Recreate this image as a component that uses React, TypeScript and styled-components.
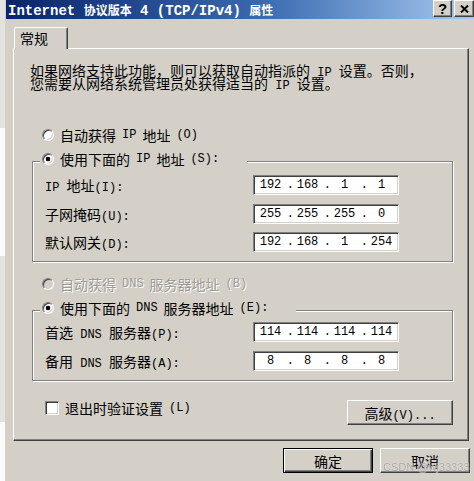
import React from 'react';
import styled, { createGlobalStyle } from 'styled-components';

const Colors = {
  face: '#d4d0c8',
  shadow: '#808080',
  dark: '#404040',
  light: '#ffffff',
  disabled: '#9f9c96',
};

const GlobalStyle = createGlobalStyle`
  html, body {
    margin: 0;
    padding: 0;
  }
  body {
    width: 474px;
    height: 481px;
    overflow: hidden;
    background: ${Colors.face};
    font-family: "Noto Sans CJK SC", sans-serif;
    font-size: 14px;
    color: #000;
  }
`;

const Screen = styled.div`
  position: relative;
  display: flex;
  width: 474px;
  height: 481px;
  overflow: hidden;
`;

// a sliver of the window behind the dialog
const BehindStrip = styled.div`
  flex: none;
  width: 5px;
  border-right: 1px solid ${Colors.face};
  background: linear-gradient(
    to bottom,
    #e4e2de 0 128px,
    #fbfbfb 128px 256px,
    #e4e2de 256px 422px,
    #fbfbfb 422px
  );
`;

const Window = styled.div`
  flex: 1;
  display: flex;
  flex-direction: column;
  min-width: 0;
`;

const TitleBar = styled.div`
  display: flex;
  align-items: flex-start;
  height: 19px;
  padding-left: 2px;
  background: linear-gradient(to right, #0a246a 0%, #3a6ab0 55%, #a6caf0 100%);
`;

const TitleText = styled.div`
  flex: 1;
  line-height: 19px;
  color: #fff;
  font-size: 12px;
  font-weight: bold;
  white-space: nowrap;
`;

const CaptionButton = styled.div<{ $width: number }>`
  display: flex;
  justify-content: center;
  align-items: center;
  box-sizing: border-box;
  width: ${(p) => p.$width}px;
  height: 17px;
  margin-left: 2px;
  background: ${Colors.face};
  border: 1px solid;
  border-color: ${Colors.light} ${Colors.dark} ${Colors.dark} ${Colors.light};
  box-shadow: inset -1px -1px 0 ${Colors.shadow};
  font-family: "Liberation Sans", sans-serif;
  font-weight: bold;
  font-size: 15px;
  line-height: 15px;
`;

const TabStrip = styled.div`
  display: flex;
  margin-top: 8px;
  padding-left: 8px;
`;

const Tab = styled.div`
  position: relative;
  z-index: 1;
  box-sizing: border-box;
  width: 54px;
  height: 22px;
  margin-bottom: -1px;
  padding: 2px 0 0 5px;
  line-height: 16px;
  background: ${Colors.face};
  border: 1px solid;
  border-color: ${Colors.light} ${Colors.dark} transparent ${Colors.light};
  border-bottom: none;
  border-radius: 2px 2px 0 0;
  box-shadow: inset -1px 0 0 ${Colors.shadow};
`;

const Panel = styled.div`
  display: flex;
  flex-direction: column;
  box-sizing: border-box;
  height: 393px;
  margin: 0 5px 0 7px;
  padding: 0 15px 0 16px;
  border: 1px solid;
  border-color: ${Colors.light} ${Colors.dark} ${Colors.dark} ${Colors.light};
  box-shadow: inset -1px -1px 0 ${Colors.shadow};
`;

const Intro = styled.p`
  margin: 15px 0 0;
  line-height: 13px;
  white-space: nowrap;
`;

const RadioRow = styled.label<{ $indent?: number; $top?: number; $disabled?: boolean }>`
  display: flex;
  align-items: center;
  gap: 6px;
  height: 16px;
  margin-left: ${(p) => p.$indent ?? 0}px;
  margin-top: ${(p) => p.$top ?? 0}px;
  line-height: 16px;
  white-space: nowrap;
  color: ${(p) => (p.$disabled ? Colors.disabled : '#000')};
  text-shadow: ${(p) => (p.$disabled ? `1px 1px 0 ${Colors.light}` : 'none')};
`;

const RadioMark = styled.span<{ $checked?: boolean; $disabled?: boolean }>`
  flex: none;
  box-sizing: border-box;
  width: 12px;
  height: 12px;
  border-radius: 50%;
  border: 1px solid;
  border-color: ${Colors.shadow} ${Colors.light} ${Colors.light} ${Colors.shadow};
  box-shadow: inset 1px 1px 0 ${Colors.dark}, inset -1px -1px 0 ${Colors.face};
  background: ${(p) =>
    p.$checked
      ? 'radial-gradient(circle, #000 0 2px, #fff 2.6px)'
      : p.$disabled
      ? Colors.face
      : '#fff'};
`;

const GroupBox = styled.fieldset<{ $top: number }>`
  box-sizing: border-box;
  width: 421px;
  min-width: 0;
  margin: ${(p) => p.$top}px 0 0 2px;
  padding: 0;
  border: 1px solid ${Colors.shadow};
  box-shadow: inset 1px 1px 0 ${Colors.light}, 1px 1px 0 ${Colors.light};
`;

const GroupLegend = styled.legend`
  margin-left: 7px;
  padding: 0 28px 4px 2px;
  background: ${Colors.face};
`;

const FieldGrid = styled.div<{ $top: number; $gap: number }>`
  display: grid;
  grid-template-columns: 1fr 146px;
  align-items: center;
  row-gap: ${(p) => p.$gap}px;
  padding: ${(p) => p.$top}px 53px 9px 12px;
`;

const FieldLabel = styled.span`
  line-height: 20px;
  white-space: nowrap;
`;

const IpField = styled.div`
  display: grid;
  grid-template-columns: 25px 12px 25px 12px 25px 12px 25px;
  align-items: center;
  box-sizing: border-box;
  height: 20px;
  padding-left: 4px;
  background: #fff;
  border: 1px solid;
  border-color: ${Colors.shadow} ${Colors.light} ${Colors.light} ${Colors.shadow};
  box-shadow: inset 1px 1px 0 ${Colors.dark}, inset -1px -1px 0 ${Colors.face};
  font-family: "Liberation Mono", monospace;
  font-size: 12px;
  line-height: 16px;
`;

const Octet = styled.span`
  text-align: center;
`;

const Dot = styled.span`
  text-align: right;
  padding-right: 1px;
`;

const BottomRow = styled.div`
  display: flex;
  justify-content: space-between;
  align-items: flex-start;
  margin-top: 19px;
  padding-left: 15px;
`;

const CheckLabel = styled.label`
  display: flex;
  align-items: center;
  gap: 6px;
  height: 16px;
  line-height: 16px;
  white-space: nowrap;
`;

const CheckBox = styled.span`
  flex: none;
  box-sizing: border-box;
  width: 14px;
  height: 14px;
  background: #fff;
  border: 1px solid;
  border-color: ${Colors.shadow} ${Colors.light} ${Colors.light} ${Colors.shadow};
  box-shadow: inset 1px 1px 0 ${Colors.dark}, inset -1px -1px 0 ${Colors.face};
`;

const Button = styled.button<{ $width: number; $isDefault?: boolean }>`
  box-sizing: border-box;
  width: ${(p) => p.$width}px;
  height: 25px;
  padding: 0;
  background: ${Colors.face};
  color: #000;
  font-family: inherit;
  font-size: 14px;
  line-height: 16px;
  white-space: nowrap;
  border: 1px solid;
  border-color: ${(p) =>
    p.$isDefault ? '#000' : `${Colors.light} ${Colors.dark} ${Colors.dark} ${Colors.light}`};
  box-shadow: ${(p) =>
    p.$isDefault
      ? `inset 1px 1px 0 ${Colors.light}, inset -1px -1px 0 ${Colors.dark}, inset -2px -2px 0 ${Colors.shadow}`
      : `inset -1px -1px 0 ${Colors.shadow}`};
`;

const DialogButtons = styled.div`
  display: flex;
  justify-content: flex-end;
  gap: 7px;
  margin-top: 7px;
  padding-right: 4px;
`;

// line-height 0 keeps the latin runs from stretching the CJK line boxes
const Latin = styled.span<{ $size?: number }>`
  font-family: "Liberation Mono", monospace;
  font-size: ${(p) => p.$size ?? 12}px;
  line-height: 0;
`;

const Watermark = styled.div`
  position: absolute;
  left: 383px;
  top: 461px;
  font-family: "Liberation Sans", sans-serif;
  font-size: 11px;
  line-height: 13px;
  color: rgba(150, 150, 150, 0.85);
  text-shadow: 0 0 1px #fff;
  pointer-events: none;
`;

// split CJK text so runs of ASCII get the narrow latin face
const Mixed = ({ text, size }: { text: string; size?: number }) => (
  <>
    {text.split(/([\x20-\x7e]+)/).map((part, i) =>
      i % 2 === 1 ? (
        <Latin key={i} $size={size}>
          {part}
        </Latin>
      ) : (
        part
      )
    )}
  </>
);

const IpAddress = ({ value }: { value: string[] }) => (
  <IpField>
    {value.map((octet, i) => (
      <React.Fragment key={i}>
        {i > 0 && <Dot>.</Dot>}
        <Octet>{octet}</Octet>
      </React.Fragment>
    ))}
  </IpField>
);

const ipRows = [
  { label: 'IP 地址(I):', value: ['192', '168', '1', '1'] },
  { label: '子网掩码(U):', value: ['255', '255', '255', '0'] },
  { label: '默认网关(D):', value: ['192', '168', '1', '254'] },
];

const dnsRows = [
  { label: '首选 DNS 服务器(P):', value: ['114', '114', '114', '114'] },
  { label: '备用 DNS 服务器(A):', value: ['8', '8', '8', '8'] },
];

const CloseGlyph = () => (
  <svg width="9" height="8" viewBox="0 0 9 8">
    <path d="M1 0.5 L8 7.5 M8 0.5 L1 7.5" stroke="#000" strokeWidth="2" fill="none" />
  </svg>
);

const App = () => (
  <>
    <GlobalStyle />
    <Screen>
      <BehindStrip />
      <Window>
        <TitleBar>
          <TitleText>
            <Mixed text="Internet 协议版本 4 (TCP/IPv4) 属性" size={14} />
          </TitleText>
          <CaptionButton $width={19}>?</CaptionButton>
          <CaptionButton $width={20}>
            <CloseGlyph />
          </CaptionButton>
        </TitleBar>

        <TabStrip>
          <Tab>常规</Tab>
        </TabStrip>

        <Panel>
          <Intro>
            <Mixed text="如果网络支持此功能，则可以获取自动指派的 IP 设置。否则，" />
            <br />
            <Mixed text="您需要从网络系统管理员处获得适当的 IP 设置。" />
          </Intro>

          <RadioRow $indent={12} $top={37}>
            <RadioMark />
            <Mixed text="自动获得 IP 地址(O)" />
          </RadioRow>

          <GroupBox $top={8}>
            <GroupLegend>
              <RadioRow>
                <RadioMark $checked />
                <Mixed text="使用下面的 IP 地址(S):" />
              </RadioRow>
            </GroupLegend>
            <FieldGrid $top={4} $gap={8.5}>
              {ipRows.map((row) => (
                <React.Fragment key={row.label}>
                  <FieldLabel>
                    <Mixed text={row.label} />
                  </FieldLabel>
                  <IpAddress value={row.value} />
                </React.Fragment>
              ))}
            </FieldGrid>
          </GroupBox>

          <RadioRow $indent={12} $top={14} $disabled>
            <RadioMark $disabled />
            <Mixed text="自动获得 DNS 服务器地址(B)" />
          </RadioRow>

          <GroupBox $top={8}>
            <GroupLegend>
              <RadioRow>
                <RadioMark $checked />
                <Mixed text="使用下面的 DNS 服务器地址(E):" />
              </RadioRow>
            </GroupLegend>
            <FieldGrid $top={2} $gap={9}>
              {dnsRows.map((row) => (
                <React.Fragment key={row.label}>
                  <FieldLabel>
                    <Mixed text={row.label} />
                  </FieldLabel>
                  <IpAddress value={row.value} />
                </React.Fragment>
              ))}
            </FieldGrid>
          </GroupBox>

          <BottomRow>
            <CheckLabel>
              <CheckBox />
              <Mixed text="退出时验证设置(L)" />
            </CheckLabel>
            <Button $width={106}>
              <Mixed text="高级(V)..." />
            </Button>
          </BottomRow>
        </Panel>

        <DialogButtons>
          <Button $width={90} $isDefault>
            确定
          </Button>
          <Button $width={90}>取消</Button>
        </DialogButtons>
      </Window>
      <Watermark>CSDN @wj33333</Watermark>
    </Screen>
  </>
);

export default App;
